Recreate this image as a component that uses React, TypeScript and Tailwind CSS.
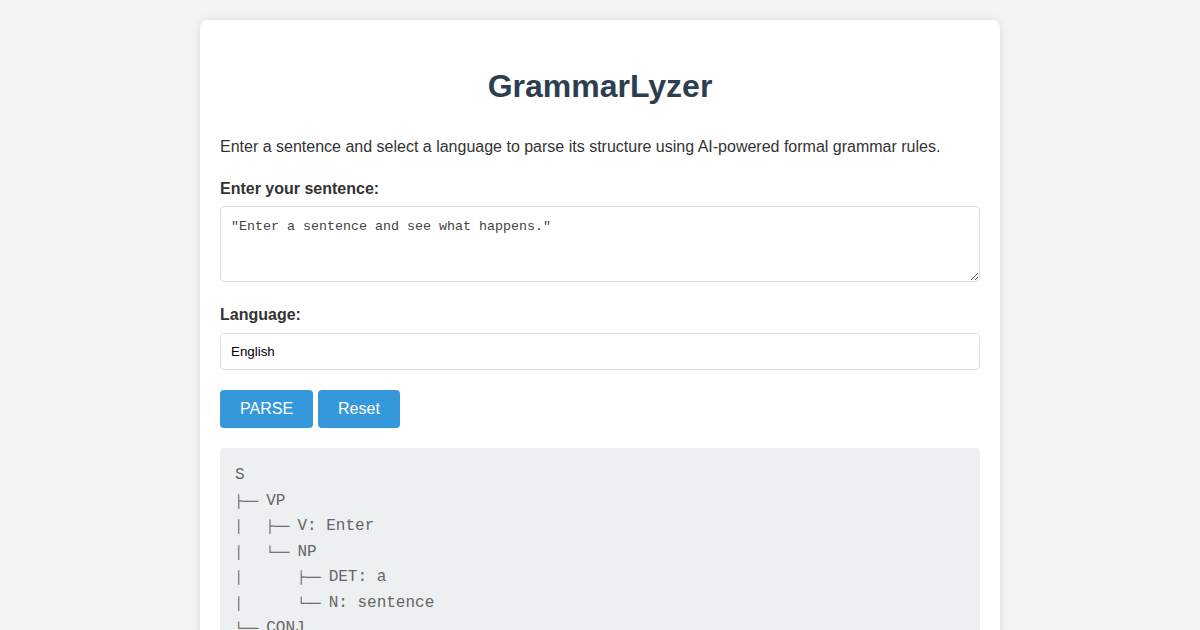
import React from "react";

const lines: [string, string][] = [
  ["", "S"],
  ["├── ", "VP"],
  ["│   ├── ", "V: Enter"],
  ["│   └── ", "NP"],
  ["│       ├── ", "DET: a"],
  ["│       └── ", "N: sentence"],
  ["└── ", "CONJ"],
  ["    └── ", "VP"],
  ["        ├── ", "V: see"],
  ["        └── ", "NP: what happens"],
];

const mono = { fontFamily: '"Liberation Mono", "Courier New", monospace' };

export default function App() {
  return (
    <div
      className="min-h-[630px] bg-[#f4f4f4] text-[#333] leading-[1.6]"
      style={{ fontFamily: '"Liberation Sans", Arial, sans-serif' }}
    >
      <div className="pt-5 pb-5">
        <div className="mx-auto w-[800px] bg-white rounded-[8px] shadow-[0_0_10px_rgba(0,0,0,0.1)] p-5">
          <h1 className="text-[32px] font-bold text-center text-[#2c3e50] leading-[51.2px] mt-[21.44px] mb-[21.44px]">
            GrammarLyzer
          </h1>
          <p className="text-[16px] leading-[25.6px] mb-4">
            Enter a sentence and select a language to parse its structure using AI-powered formal grammar rules.
          </p>
          <label className="block font-bold text-[16px] leading-[25.6px] mb-[4.8px]">
            Enter your sentence:
          </label>
          <textarea
            className="block w-full h-[76px] border border-[#ddd] rounded-[4px] p-[10px] text-[13.33px] leading-normal text-[#444] resize-y outline-none"
            style={mono}
            defaultValue={'"Enter a sentence and see what happens."'}
          />
          <label className="block font-bold text-[16px] leading-[25.6px] mt-[20px] mb-[5.5px]">
            Language:
          </label>
          <div className="w-full h-[37px] border border-[#ddd] rounded-[4px] px-[10px] flex items-center text-[13.33px] text-black">
            English
          </div>
          <div className="flex gap-[5px] mt-5">
            <button className="h-[38px] px-5 bg-[#3498db] text-white text-[16px] rounded-[4px]">
              PARSE
            </button>
            <button className="h-[38px] px-5 bg-[#3498db] text-white text-[16px] rounded-[4px]">
              Reset
            </button>
          </div>
          <div
            className="mt-5 bg-[#ecf0f1] rounded-[4px] p-[15px] text-[#666]"
            style={mono}
          >
            {lines.map(([prefix, label], i) => (
              <div key={i} className="whitespace-pre leading-[25.5px] text-[16px]">
                <span className="text-[13px] text-[#555]">{prefix}</span>
                <span>{label}</span>
              </div>
            ))}
          </div>
        </div>
      </div>
    </div>
  );
}
